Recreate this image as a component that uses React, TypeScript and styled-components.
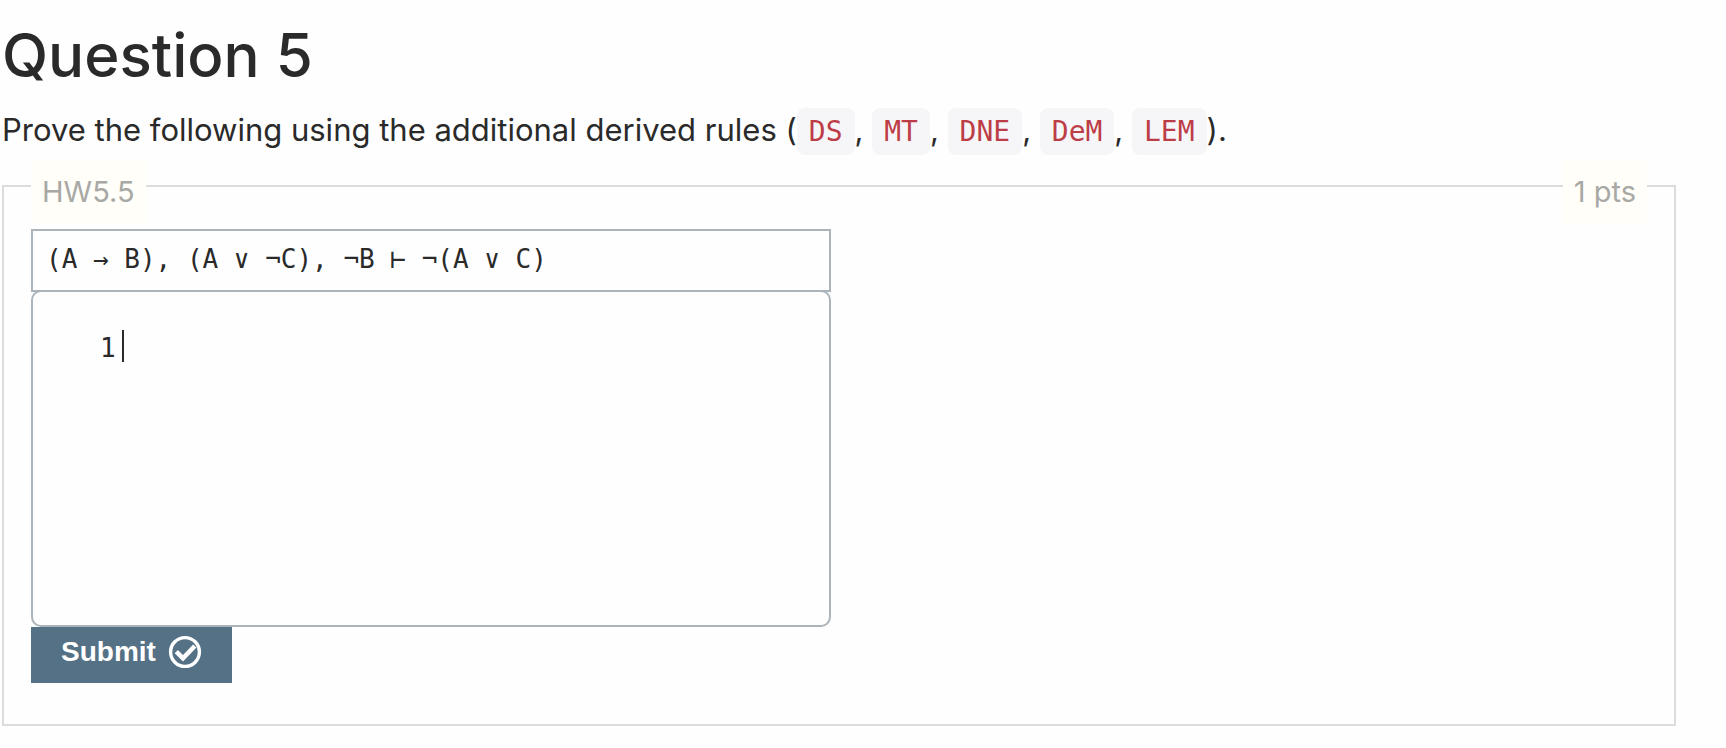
import React from 'react';
import styled, { createGlobalStyle } from 'styled-components';

const sans = 'Inter, "Liberation Sans", sans-serif';
const mono = '"DejaVu Sans Mono", "Liberation Mono", monospace';

const GlobalStyle = createGlobalStyle`
  *, *::before, *::after { box-sizing: border-box; }
  body {
    margin: 0;
    background: #fefefe;
    color: #2a2a2a;
    font-family: ${sans};
  }
`;

const Page = styled.main`
  padding: 17px 50px 24px 2px;
`;

const Title = styled.h1`
  margin: 0;
  font-size: 60px;
  line-height: 76px;
  font-weight: 500;
`;

const Prompt = styled.p`
  margin: 11px 0 0;
  font-size: 31px;
  line-height: 52px;
`;

const Rule = styled.code`
  padding: 7px 12px;
  border-radius: 8px;
  background: #f6f6f9;
  color: #bd3d47;
  font-family: ${mono};
  font-size: 28px;
`;

const Problem = styled.section`
  margin-top: 27px;
  padding: 0 27px 41px;
  border: 2px solid #dcdcdc;
`;

const ProblemHeader = styled.header`
  display: flex;
  justify-content: space-between;
  margin: -27px 0 5px;
`;

const Tag = styled.span`
  padding: 0 11px;
  background: #fffef8;
  color: #a8a8a5;
  font-size: 29px;
  line-height: 64px;
`;

const Proof = styled.form`
  display: flex;
  flex-direction: column;
  align-items: flex-start;
`;

const Goal = styled.div`
  width: 100%;
  max-width: 800px;
  padding: 0 13px 3px;
  border: 2px solid #abb4bb;
  font-family: ${mono};
  font-size: 26px;
  line-height: 56px;
  white-space: nowrap;
`;

const Editor = styled.div`
  display: flex;
  width: 100%;
  max-width: 800px;
  height: 337px;
  margin-top: -2px;
  padding: 38px 14px 24px 67px;
  border: 2px solid #abb4bb;
  border-radius: 10px;
  font-family: ${mono};
  font-size: 26px;
  line-height: 36px;
`;

const Caret = styled.span`
  width: 2px;
  height: 32px;
  margin-left: 6px;
  background: #2a2a2a;
`;

const ProofInput = styled.textarea`
  flex: 1;
  padding: 0;
  border: 0;
  outline: 0;
  resize: none;
  background: transparent;
  color: inherit;
  font: inherit;
`;

const SubmitButton = styled.button`
  display: flex;
  align-items: center;
  gap: 12px;
  height: 56px;
  padding: 0 30px 6px;
  border: 0;
  background: #557186;
  color: #fff;
  font-family: "Liberation Sans", Arial, sans-serif;
  font-size: 28px;
  font-weight: 700;
  line-height: 32px;
`;

const CheckIcon = () => (
  <svg width="34" height="34" viewBox="0 0 34 34" fill="none" stroke="currentColor" aria-hidden="true">
    <circle cx="17" cy="17" r="14.4" strokeWidth="3.4" />
    <path d="M8.3 16.6 15 23.3 26.8 11" strokeWidth="4.6" />
  </svg>
);

const rules = ['DS', 'MT', 'DNE', 'DeM', 'LEM'];

export default function App() {
  return (
    <>
      <GlobalStyle />
      <Page>
        <Title>Question 5</Title>
        <Prompt>
          Prove the following using the additional derived rules (
          {rules.map((rule, i) => (
            <React.Fragment key={rule}>
              {i > 0 && ', '}
              <Rule>{rule}</Rule>
            </React.Fragment>
          ))}
          ).
        </Prompt>
        <Problem>
          <ProblemHeader>
            <Tag>HW5.5</Tag>
            <Tag>1 pts</Tag>
          </ProblemHeader>
          <Proof onSubmit={(e) => e.preventDefault()}>
            <Goal>(A → B), (A ∨ ¬C), ¬B ⊢ ¬(A ∨ C)</Goal>
            <Editor>
              <span>1</span>
              <Caret />
              <ProofInput aria-label="Proof" spellCheck={false} />
            </Editor>
            <SubmitButton type="submit">
              Submit
              <CheckIcon />
            </SubmitButton>
          </Proof>
        </Problem>
      </Page>
    </>
  );
}
